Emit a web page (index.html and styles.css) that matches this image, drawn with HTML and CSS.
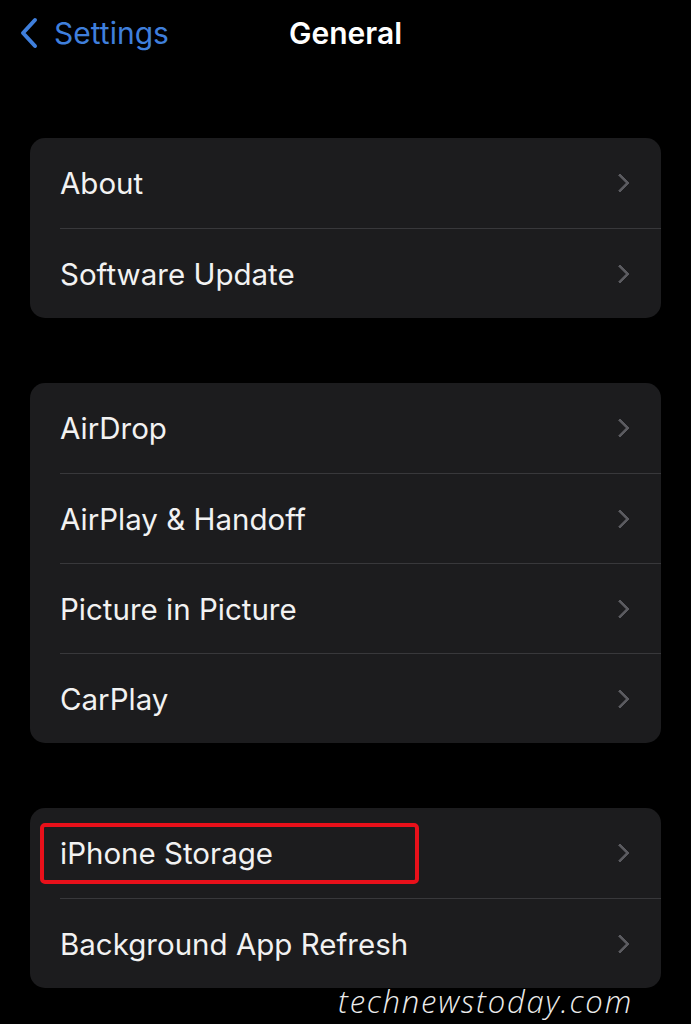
FILE: index.html
```html
<!DOCTYPE html>
<html lang="en">

<head>
    <meta charset="UTF-8">
    <meta name="viewport" content="width=device-width, initial-scale=1.0">
    <title>General</title>
    <link rel="stylesheet" href="styles.css">
</head>

<body>
    <div class="screen">
        <header class="nav-bar">
            <a class="back-link" href="#">
                <svg class="back-chevron" width="22" height="32" viewBox="0 0 22 32">
                    <path d="M17 3 L5 16 L17 29" fill="none" stroke="currentColor" stroke-width="4" stroke-linecap="round" stroke-linejoin="round" />
                </svg>
                <span>Settings</span>
            </a>
            <h1 class="nav-title">General</h1>
            <span></span>
        </header>

        <div class="groups">
            <ul class="group">
                <li class="row"><span class="row-label">About</span><span class="chevron"></span></li>
                <li class="row"><span class="row-label">Software Update</span><span class="chevron"></span></li>
            </ul>

            <ul class="group">
                <li class="row"><span class="row-label">AirDrop</span><span class="chevron"></span></li>
                <li class="row"><span class="row-label">AirPlay &amp; Handoff</span><span class="chevron"></span></li>
                <li class="row"><span class="row-label">Picture in Picture</span><span class="chevron"></span></li>
                <li class="row"><span class="row-label">CarPlay</span><span class="chevron"></span></li>
            </ul>

            <ul class="group">
                <li class="row highlighted"><span class="row-label">iPhone Storage</span><span class="chevron"></span></li>
                <li class="row"><span class="row-label">Background App Refresh</span><span class="chevron"></span></li>
            </ul>
        </div>

        <div class="watermark">technewstoday.com</div>
    </div>
</body>

</html>
```

FILE: styles.css
```css
html,
body {
    margin: 0;
    background: #000;
}

body {
    font-family: Inter, "Liberation Sans", sans-serif;
    color: #f2f2f2;
}

.screen {
    position: relative;
    width: 691px;
    height: 1024px;
    overflow: hidden;
}

.nav-bar {
    display: grid;
    grid-template-columns: 1fr auto 1fr;
    align-items: center;
    height: 66px;
    padding: 0 18px;
}

.back-link {
    display: flex;
    align-items: center;
    gap: 14px;
    color: #3f7fdc;
    text-decoration: none;
    font-size: 30px;
}

.back-chevron {
    display: block;
}

.nav-title {
    margin: 0;
    font-size: 30px;
    font-weight: 600;
    color: #fff;
}

.groups {
    display: flex;
    flex-direction: column;
    gap: 65px;
    padding: 72px 30px 0;
}

.group {
    list-style: none;
    margin: 0;
    padding: 0;
    background: #1c1c1e;
    border-radius: 15px;
}

.row {
    position: relative;
    display: flex;
    align-items: center;
    justify-content: space-between;
    height: 90px;
    margin-left: 30px;
    padding-right: 34px;
    font-size: 29.5px;
}

.row + .row {
    border-top: 1px solid #38383b;
    height: 89px;
}

.chevron {
    width: 11px;
    height: 11px;
    border-top: 3px solid #5b5b60;
    border-right: 3px solid #5b5b60;
    border-radius: 1px;
    transform: rotate(45deg);
}

.highlighted::after {
    content: "";
    position: absolute;
    left: -20px;
    top: 15px;
    width: 371px;
    height: 53px;
    border: 4px solid #e8101a;
    border-radius: 5px;
}

.watermark {
    position: absolute;
    left: 338px;
    top: 980px;
    font-family: "Open Sans", sans-serif;
    font-style: italic;
    font-weight: 300;
    font-size: 31px;
    letter-spacing: 1.8px;
    color: #ececec;
}
```
